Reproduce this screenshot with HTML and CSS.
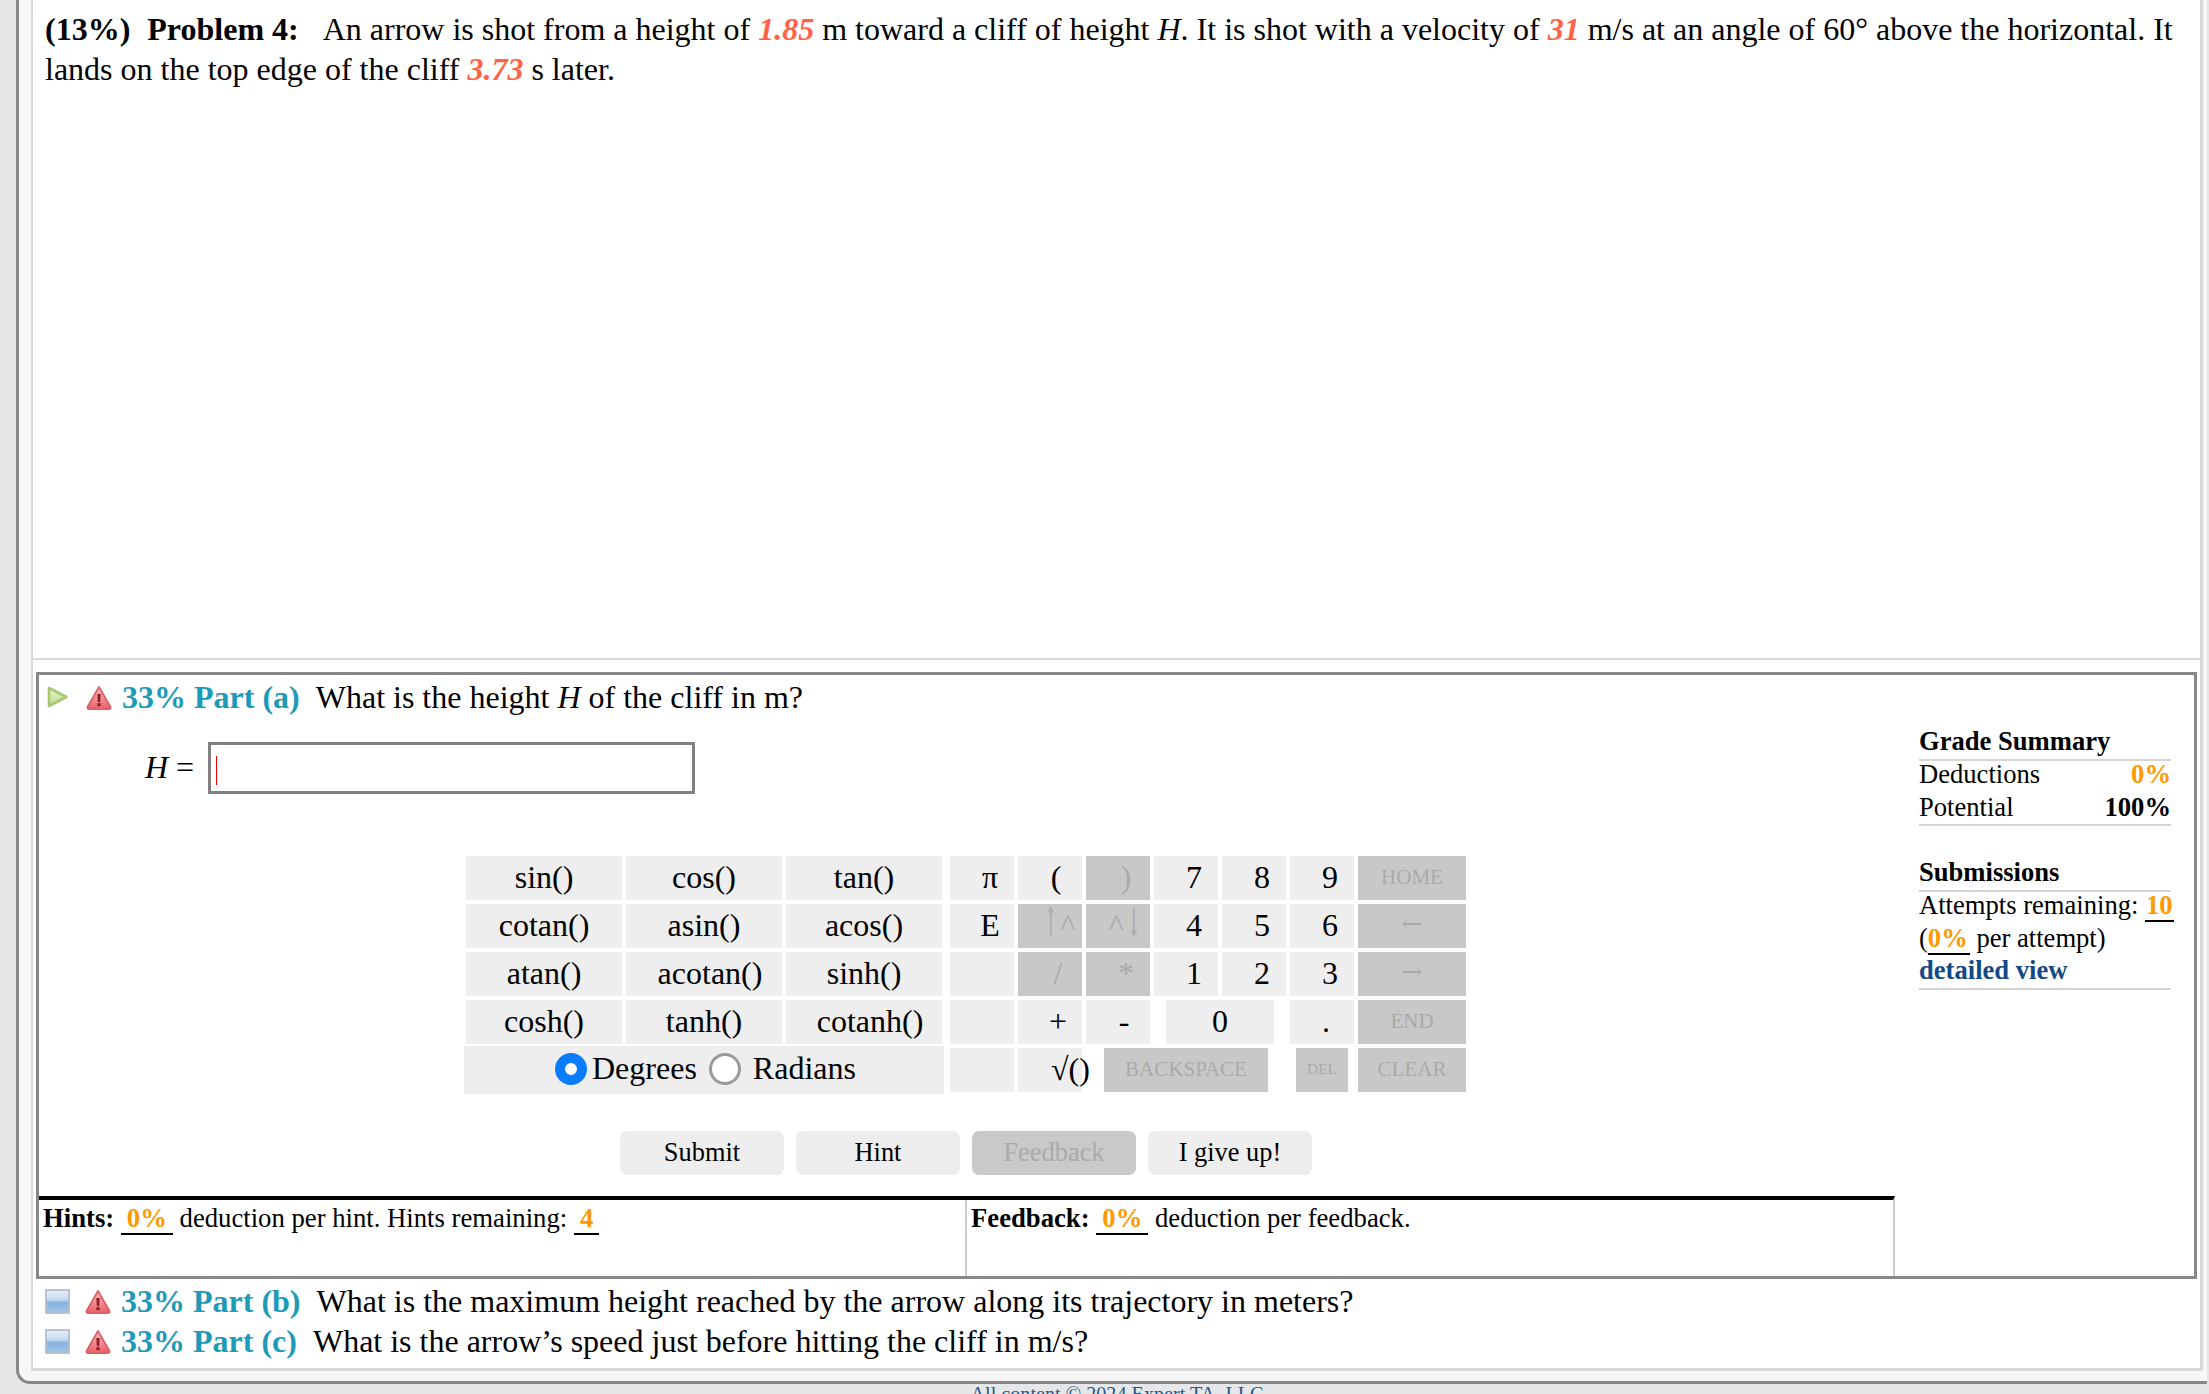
FILE: index.html
```html
<!DOCTYPE html>
<html lang="en">
<head>
<meta charset="utf-8">
<title>Problem 4</title>
<link rel="stylesheet" href="styles.css">
</head>
<body>
<svg class="defs" width="0" height="0" aria-hidden="true">
  <defs>
    <linearGradient id="gGreen" x1="0" y1="0" x2="0" y2="1"><stop offset="0" stop-color="#e6f2cc"/><stop offset="1" stop-color="#bcd98a"/></linearGradient>
    <linearGradient id="gRed" x1="0" y1="0" x2="0" y2="1"><stop offset="0" stop-color="#f9c0c0"/><stop offset="1" stop-color="#ea6068"/></linearGradient>
    <linearGradient id="gBlue" x1="0" y1="0" x2="0" y2="1"><stop offset="0" stop-color="#e6eff8"/><stop offset=".42" stop-color="#c8daef"/><stop offset=".55" stop-color="#86b2de"/><stop offset="1" stop-color="#a4c5e6"/></linearGradient>
    <symbol id="warn" viewBox="0 0 26 25"><path d="M13 2 L24.5 22 Q25 24 23 24 L3 24 Q1 24 1.5 22 Z" fill="url(#gRed)" stroke="#dc5f67" stroke-width="1.8" stroke-linejoin="round"/><path d="M11.4 9 h3.2 l-.5 8 h-2.2 Z" fill="#8c1a20"/><rect x="11.4" y="18.2" width="3.2" height="3" fill="#8c1a20"/></symbol>
    <symbol id="box" viewBox="0 0 25 25"><rect x="1" y="1" width="23" height="23" fill="url(#gBlue)" stroke="#aebfd0" stroke-width="1.8"/></symbol>
  </defs>
</svg>
<div class="shell">
  <div class="inner">
    <div class="problem">
      <p class="statement"><b class="pct">(13%)</b><b class="pname">Problem 4:</b>An arrow is shot from a height of <b class="val">1.85</b> m toward a cliff of height <i>H</i>. It is shot with a velocity of <b class="val">31</b> m/s at an angle of 60° above the horizontal. It lands on the top edge of the cliff <b class="val">3.73</b> s later.</p>
    </div>
    <div class="frame">
      <div class="frame-top">
        <div class="work">
          <div class="part-line part-a">
            <svg class="ic-play" viewBox="0 0 21 22"><path d="M2 2 L19.5 11 L2 20 Z" fill="url(#gGreen)" stroke="#a8c672" stroke-width="2.6" stroke-linejoin="round"/></svg>
            <svg class="ic-warn"><use href="#warn"/></svg>
            <b class="part-label">33% Part (a)</b><span class="part-q">What is the height <i>H</i> of the cliff in m?</span>
          </div>
          <div class="answer">
            <span class="answer-label"><i>H</i> =</span>
            <div class="answer-box"><span class="caret"></span></div>
          </div>
          <div class="keypad">
            <div class="fn-keys">
              <button class="key">sin()</button><button class="key">cos()</button><button class="key">tan()</button>
              <button class="key">cotan()</button><button class="key">asin()</button><button class="key">acos()</button>
              <button class="key">atan()</button><button class="key long">acotan()</button><button class="key">sinh()</button>
              <button class="key">cosh()</button><button class="key">tanh()</button><button class="key long">cotanh()</button>
              <div class="angle-mode">
                <span class="radio on"></span><span class="angle-a">Degrees</span><span class="radio"></span><span class="angle-b">Radians</span>
              </div>
            </div>
            <div class="num-keys">
              <button class="key off-center">π</button><button class="key off-center nudge">(</button><button class="key off-center dis">)</button><button class="key off-center">7</button><button class="key off-center">8</button><button class="key off-center">9</button><button class="key dis small">HOME</button>
              <button class="key off-center">E</button><button class="key off-center dis"><span class="tall">↑</span>^</button><button class="key off-center dis">^<span class="tall">↓</span></button><button class="key off-center">4</button><button class="key off-center">5</button><button class="key off-center">6</button><button class="key dis small"><span class="wide-arrow">←</span></button>
              <button class="key off-center"></button><button class="key off-center dis">/</button><button class="key off-center dis">*</button><button class="key off-center">1</button><button class="key off-center">2</button><button class="key off-center">3</button><button class="key dis small"><span class="wide-arrow">→</span></button>
              <button class="key off-center"></button><button class="key off-center">+</button><button class="key off-center nudge">-</button><button class="key zero">0</button><button class="key off-center dot">.</button><button class="key dis small">END</button>
              <button class="key off-center"></button><button class="key sqrt">√()</button><button class="key dis small backspace">BACKSPACE</button><button class="key dis del">DEL</button><button class="key dis small">CLEAR</button>
            </div>
          </div>
          <div class="actions">
            <button class="act">Submit</button><button class="act">Hint</button><button class="act dis">Feedback</button><button class="act">I give up!</button>
          </div>
          <div class="info">
            <div class="info-cell hints"><b>Hints:</b> <b class="mark wide">0%</b> deduction per hint. Hints remaining: <b class="mark wide">4</b></div>
            <div class="info-cell feedback"><b>Feedback:</b> <b class="mark wide">0%</b> deduction per feedback.</div>
          </div>
        </div>
        <aside class="side">
          <div class="side-head">Grade Summary</div>
          <div class="side-row"><span>Deductions</span><b class="orange">0%</b></div>
          <div class="side-row last"><span>Potential</span><b>100%</b></div>
          <div class="side-head sub">Submissions</div>
          <div class="side-row"><span>Attempts remaining: <b class="mark tail">10</b></span></div>
          <div class="side-row"><span>(<b class="mark pc">0%</b> per attempt)</span></div>
          <div class="side-row last"><b class="detail">detailed view</b></div>
        </aside>
      </div>
    </div>
    <div class="part-line part-b">
      <svg class="ic-box"><use href="#box"/></svg>
      <svg class="ic-warn"><use href="#warn"/></svg>
      <b class="part-label">33% Part (b)</b><span class="part-q">What is the maximum height reached by the arrow along its trajectory in meters?</span>
    </div>
    <div class="part-line part-b">
      <svg class="ic-box"><use href="#box"/></svg>
      <svg class="ic-warn"><use href="#warn"/></svg>
      <b class="part-label">33% Part (c)</b><span class="part-q">What is the arrow’s speed just before hitting the cliff in m/s?</span>
    </div>
  </div>
</div>
<div class="footer">All content © 2024 Expert TA, LLC</div>
</body>
</html>
```
FILE: styles.css
```css
* { box-sizing: border-box; }
html, body { margin: 0; height: 1394px; overflow: hidden; }
body { background: #e6e7e9; font-family: "Liberation Serif", "Times New Roman", serif; color: #000; position: relative; }
.defs { position: absolute; }
b { font-weight: 700; }

.shell { margin-left: 16px; width: 2191px; height: 1384px; background: #f7f7f7; border-left: 3px solid #888; border-bottom: 3px solid #888; border-bottom-left-radius: 14px; padding-left: 12px; padding-right: 4px; }
.inner { height: 1371px; background: #fff; border-left: 2px solid #d8d8d8; border-right: 3px solid #d8d8d8; border-bottom: 3px solid #d8d8d8; }

.problem { height: 660px; padding: 9px 0 0 12px; border-bottom: 2px solid #d8d8d8; }
.statement { margin: 0; width: 2132px; font-size: 32px; line-height: 40px; }
.pct { margin-right: 17px; }
.pname { margin-right: 24px; }
.val { color: #ff6347; font-style: italic; }

.frame { margin: 12px 3px 0 3px; height: 607px; border: 3px solid #888; }
.frame-top { display: flex; height: 100%; }
.work { width: 1857px; display: flex; flex-direction: column; }

.part-line { display: flex; align-items: center; font-size: 32px; }
.part-label { color: #1e9ab9; margin-right: 16px; }
.part-a { height: 40px; padding-left: 8px; margin-top: 2px; }
.ic-play { width: 21px; height: 22px; margin-right: 18px; }
.ic-warn { width: 26px; height: 25px; margin-right: 10px; flex: none; }
.ic-box { width: 25px; height: 25px; margin-right: 15px; flex: none; }
.part-b { height: 40px; padding-left: 12px; }
.frame + .part-b { margin-top: 2px; }

.answer { display: flex; align-items: center; margin-top: 25px; padding-left: 106px; height: 52px; }
.answer-label { font-size: 32px; width: 63px; white-space: nowrap; padding-bottom: 2px; }
.answer-box { width: 487px; height: 52px; border: 3px solid #808080; padding: 11px 0 0 5px; background: #fff; }
.caret { display: block; width: 1.4px; height: 29px; background: #f00; }

.keypad { display: flex; gap: 8px; margin: 62px 0 0 427px; }
.fn-keys { display: grid; grid-template-columns: repeat(3, 156px); grid-auto-rows: 44px; gap: 4px; }
.num-keys { display: grid; grid-template-columns: repeat(6, 64px) 108px; grid-auto-rows: 44px; gap: 4px; }
.key { border: 0; padding: 0 0 2px; margin: 0; background: #eee; font-family: inherit; font-size: 32px; line-height: 42px; color: #000; text-align: center; white-space: nowrap; }
.key.long { padding-left: 12px; }
.off-center { padding-left: 16px; overflow: visible; }
.nudge { padding-left: 12px; }
.dis { background: #c8c8c8; color: #aaa; }
.small { font-size: 21px; }
.tall { font-family: "DejaVu Serif", "Liberation Serif", serif; font-size: 40px; line-height: 0; transform: scaleX(.48); display: inline-block; margin: 0 -7px; }
.wide-arrow { font-family: "DejaVu Serif", "Liberation Serif", serif; font-size: 25px; line-height: 0; }
.zero { grid-column: span 2; justify-self: center; width: 108px; }
.sqrt { padding-left: 33px; text-align: left; background: #eee; overflow: visible; }
.backspace { grid-column: span 3; justify-self: center; width: 164px; }
.del { width: 52px; justify-self: center; font-size: 15.5px; padding-left: 0; }
.dot { padding-left: 8px; }

.angle-mode { grid-column: span 3; margin: -2px; background: #eee; display: flex; align-items: center; font-size: 32px; padding: 0 0 3px 91px; }
.radio { width: 32px; height: 32px; border-radius: 50%; border: 3px solid #9a9a9a; background: #fff; flex: none; }
.radio.on { border: 10px solid #0a7cff; }
.angle-a { margin: 0 12px 0 5px; }
.angle-b { margin-left: 12px; }

.actions { display: flex; gap: 12px; margin: 39px 0 0 581px; }
.act { width: 164px; height: 44px; border: 0; border-radius: 7px; background: #eee; font-family: inherit; font-size: 26.4px; color: #000; padding: 0 0 2px; }
.act.dis { background: #c9c9c9; color: #aaa; }

.info { margin-top: 21px; border-top: 4px solid #000; display: flex; flex: 1; border-right: 2px solid #ccc; }
.info-cell { font-size: 26.7px; line-height: 32px; padding: 2px 0 0 4px; white-space: nowrap; }
.hints { width: 928px; border-right: 2px solid #ccc; }
.feedback { flex: 1; }
.mark { color: #ff9900; border-bottom: 2px solid #000; }
.mark.wide { padding: 0 6px; }
.mark.tail { padding: 0 1px; }
.mark.pc { padding-right: 2px; }
.orange { color: #ff9900; }

.side { width: 299px; padding: 50px 23px 0 24px; font-size: 26.6px; line-height: 32.5px; }
.side-head { font-weight: 700; border-bottom: 2px solid #d4d4d4; height: 36px; margin-bottom: -3px; }
.side-head.sub { margin-top: 30px; }
.side-row { display: flex; justify-content: space-between; white-space: nowrap; }
.side-row.last { border-bottom: 2px solid #d4d4d4; padding-bottom: 1px; }
.detail { color: #134a86; }

.footer { position: absolute; left: 0; top: 1384px; text-align: center; font-size: 20.2px; color: #27598c; line-height: 20px; width: 2234px; }
```
